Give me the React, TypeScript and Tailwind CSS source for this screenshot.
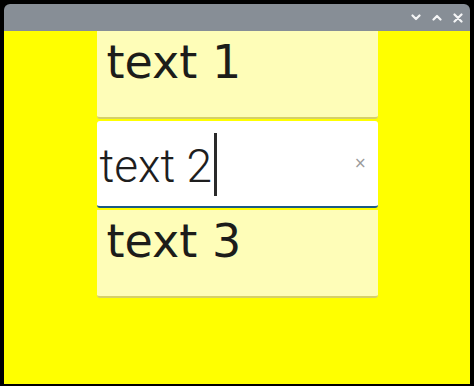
import React from "react";

const dejavu = { fontFamily: '"DejaVu Sans", sans-serif' };
const roboto = { fontFamily: 'Roboto, "Liberation Sans", sans-serif' };

const Chevron = ({ up }: { up?: boolean }) => (
  <svg width="10" height="7" viewBox="0 0 10 7" fill="none">
    <path d={up ? "M1.5 5.5 L5 2 L8.5 5.5" : "M1.5 1.5 L5 5 L8.5 1.5"} stroke="#f4f5f6" strokeWidth="2.2" strokeLinecap="round" strokeLinejoin="round" />
  </svg>
);

const Close = () => (
  <svg width="10" height="10" viewBox="0 0 10 10" fill="none">
    <path d="M1.5 1.5 L8.5 8.5 M8.5 1.5 L1.5 8.5" stroke="#f4f5f6" strokeWidth="2.2" strokeLinecap="round" />
  </svg>
);

const NoteCard = ({ text, className = "" }: { text: string; className?: string }) => (
  <div className={`w-[281px] h-[88px] bg-[#fefdb8] rounded-b-[3px] border-b-2 border-[#d6d067] pl-[10px] pt-[5px] ${className}`}>
    <span className="block text-[46px] leading-[1.16] text-[#1c1c1a]" style={dejavu}>
      {text}
    </span>
  </div>
);

export default function App() {
  return (
    <div className="w-[474px] h-[386px] bg-black overflow-hidden pl-[4px] pt-[4px]">
      <div className="w-[466px] h-[380px] flex flex-col">
        {/* title bar */}
        <div className="h-[27px] bg-[#878e96] rounded-t-[6px] flex items-center justify-end gap-[11px] pr-[7px]">
          <Chevron />
          <Chevron up />
          <Close />
        </div>

        {/* content */}
        <div className="flex-1 bg-[#ffff00] flex flex-col items-center">
          <NoteCard text="text 1" />

          <div className="mt-[2px] w-[281px] h-[87px] bg-white rounded-[3px] border-b-2 border-[#1b5a86] flex items-center relative">
            <span className="text-[46px] font-light leading-[1.17] text-[#1e1e1e] pl-[3px] mt-[6px]" style={roboto}>
              text 2
            </span>
            <span className="w-[3px] h-[63px] bg-[#2a2a2a] ml-[2px] mt-[2px]" />
            <span className="absolute right-[11px] top-[35px] text-[15px] leading-none text-[#9a9a9a]" style={dejavu}>
              ×
            </span>
          </div>

          <NoteCard text="text 3" className="mt-[2px]" />
        </div>
      </div>
    </div>
  );
}
